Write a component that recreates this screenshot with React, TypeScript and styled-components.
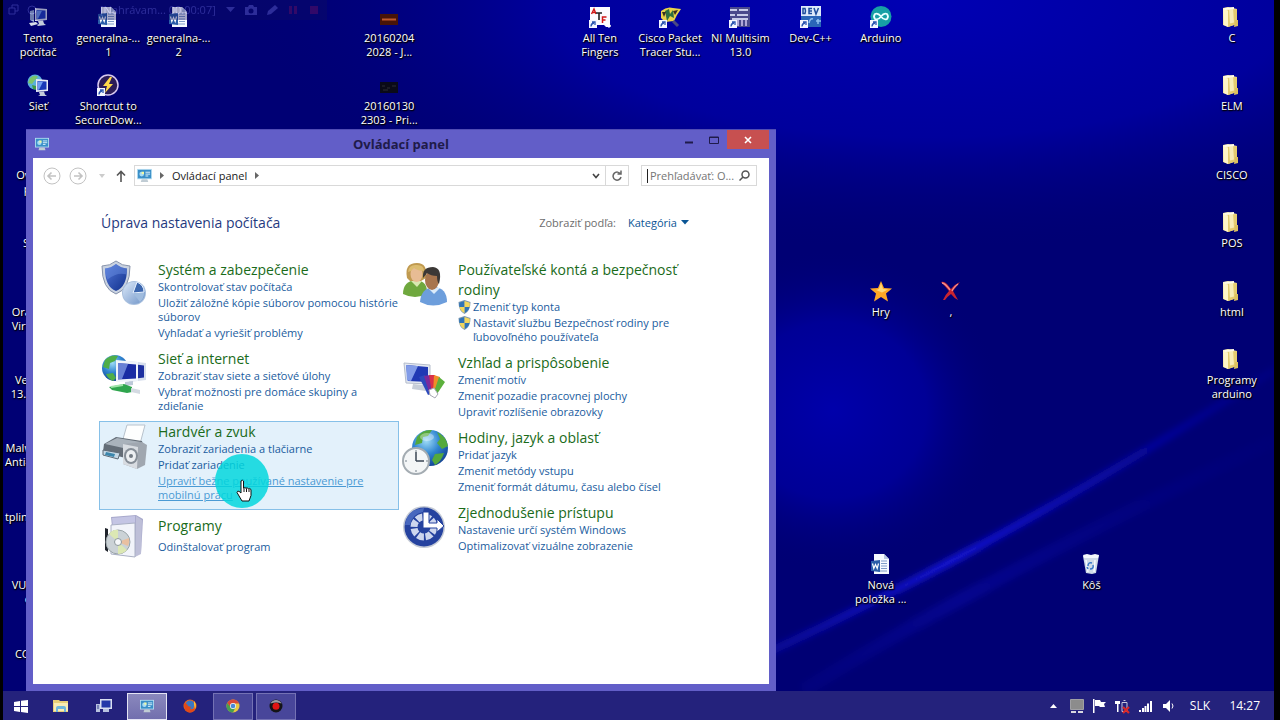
import React from "react";
import styled, { createGlobalStyle, css } from "styled-components";

const GlobalStyle = createGlobalStyle`
  * { box-sizing: border-box; }
  body { margin: 0; background: #000; font-family: "Open Sans", "Noto Sans", sans-serif; font-size: 11px; line-height: 14px; }
  button, input, select { font: inherit; color: inherit; margin: 0; padding: 0; border: 0; background: none; }
  ul { list-style: none; margin: 0; padding: 0; }
  svg { display: block; flex: none; }
`;

/* ---------- desktop ---------- */

const Screen = styled.div`
  display: flex;
  flex-direction: column;
  height: 100vh;
  padding: 0 6px 0 3px;
  background: #000;
`;

const Desktop = styled.main`
  position: relative;
  flex: 1;
  min-height: 0;
  overflow: hidden;
  background: #000078;
`;

const Wallpaper = styled.svg`
  position: absolute;
  inset: 0;
  width: 100%;
  height: 100%;
`;

const IconGrid = styled.div`
  position: relative;
  height: 100%;
  display: grid;
  grid-template-columns: repeat(18, minmax(0, 1fr));
  grid-template-rows: repeat(10, minmax(0, 1fr));
  padding: 0 7px 7px 0;
`;

const Shortcut = styled.button<{ $col: number; $row: number }>`
  grid-column: ${(p) => p.$col};
  grid-row: ${(p) => p.$row};
  display: flex;
  flex-direction: column;
  align-items: center;
  justify-content: flex-start;
  gap: 3px;
  padding-top: 6px;
  color: #fff;
  white-space: pre;
  text-shadow: 0 1px 2px #000, 1px 1px 1px #000;
`;

const RecorderBar = styled.div`
  position: absolute;
  top: 0;
  left: 0;
  display: flex;
  align-items: center;
  gap: 10px;
  height: 20px;
  width: 324px;
  padding-left: 5px;
  color: #8080e0;
  background: #101060;
  opacity: 0.35;
`;

const RecorderTitle = styled.span`
  padding-left: 50px;
`;

/* ---------- window ---------- */

const Window = styled.section`
  position: absolute;
  top: 129px;
  bottom: 0;
  left: 23px;
  width: 59%;
  display: flex;
  flex-direction: column;
  padding: 0 7px 7px;
  background: #625ec8;
  border-top: 1px solid #504cb4;
`;

const TitleBar = styled.header`
  display: grid;
  grid-template-columns: 95px 1fr 95px;
  align-items: center;
  height: 28px;
`;

const TitleIcon = styled.span`
  padding-left: 2px;
`;

const Title = styled.h1`
  margin: 0;
  font-size: 13px;
  line-height: 20px;
  text-align: center;
  color: #1f1b4a;
`;

const WindowButtons = styled.div`
  display: flex;
  align-self: start;
  justify-content: flex-end;
`;

const WindowButton = styled.button<{ $danger?: boolean }>`
  display: grid;
  place-items: center;
  width: ${(p) => (p.$danger ? 42 : 25)}px;
  height: 19px;
  background: ${(p) => (p.$danger ? "#c75050" : "transparent")};
`;

const Client = styled.div`
  flex: 1;
  min-height: 0;
  background: #fff;
  color: #222;
`;

const NavBar = styled.nav`
  display: flex;
  align-items: center;
  padding: 7px 12px 0 9px;
`;

const NavButton = styled.button<{ $width: number }>`
  display: grid;
  place-items: center;
  width: ${(p) => p.$width}px;
  height: 20px;
`;

const AddressBar = styled.div`
  display: flex;
  align-items: center;
  flex: 1;
  height: 21px;
  margin-right: 12px;
  border: 1px solid #d9d9d9;
`;

const CrumbIcon = styled.span`
  padding: 0 8px 0 2px;
`;

const Crumb = styled.button`
  padding: 0 8px;
  color: #1a1a1a;
`;

const AddressEnd = styled.div`
  display: flex;
  align-self: stretch;
  margin-left: auto;
`;

const AddressButton = styled.button<{ $divided?: boolean }>`
  display: grid;
  place-items: center;
  width: ${(p) => (p.$divided ? 23 : 17)}px;
  ${(p) => p.$divided && css`border-left: 1px solid #d9d9d9;`}
`;

const SearchBox = styled.label`
  display: flex;
  align-items: center;
  width: 116px;
  height: 21px;
  padding: 0 6px 0 5px;
  border: 1px solid #d9d9d9;
`;

const Caret = styled.span`
  width: 1px;
  height: 14px;
  background: #222;
`;

const SearchInput = styled.input`
  flex: 1;
  min-width: 0;
  padding-left: 2px;
  outline: 0;
  &::placeholder { color: #757575; opacity: 1; }
`;

const Heading = styled.div`
  display: flex;
  align-items: center;
  justify-content: space-between;
  max-width: 656px;
  height: 73px;
  padding-left: 68px;
`;

const HeadingText = styled.h2`
  margin: 0;
  font-size: 14px;
  line-height: 20px;
  font-weight: 400;
  color: #1f3a80;
`;

const ViewBy = styled.label`
  display: flex;
  align-items: center;
  color: #6d6d6d;
`;

const ViewSelect = styled.select`
  appearance: none;
  margin: 0 4px 0 12px;
  color: #0a5595;
`;

const Categories = styled.div`
  display: grid;
  grid-template-columns: repeat(2, minmax(0, 300px));
  align-items: start;
  padding-left: 66px;
`;

const Category = styled.article<{ $active?: boolean }>`
  display: flex;
  gap: 9px;
  padding: 1px 2px 8px;
  ${(p) => p.$active && css`
    background: #e3f1fb;
    box-shadow: inset 0 0 0 1px #86c0e8;
  `}
`;

const CategoryBody = styled.div`
  display: flex;
  flex-direction: column;
  justify-content: space-evenly;
  min-height: 46px;
  white-space: pre;
`;

const CategoryTitle = styled.a`
  font-size: 14px;
  line-height: 20px;
  color: #1a6b1a;
  text-decoration: none;
`;

const Tasks = styled.ul`
  display: grid;
  gap: 2px;
`;

const Task = styled.li`
  display: flex;
  gap: 2px;
`;

const TaskLink = styled.a<{ $hover?: boolean }>`
  color: ${(p) => (p.$hover ? "#4a9ad4" : "#1a5c9e")};
  text-decoration: ${(p) => (p.$hover ? "underline" : "none")};
`;

const ClickHalo = styled.div`
  position: absolute;
  top: 454px;
  left: 212px;
  width: 54px;
  height: 54px;
  border-radius: 50%;
  background: rgba(0, 214, 220, 0.84);
`;

const Pointer = styled.svg`
  position: absolute;
  top: 479px;
  left: 233px;
`;

/* ---------- taskbar ---------- */

const Taskbar = styled.footer`
  display: flex;
  align-items: center;
  gap: 3px;
  height: 29px;
  padding: 1px 0 0;
  background: #24227c;
  color: #fff;
`;

const TaskButton = styled.button<{ $state?: "active" | "open"; $narrow?: boolean }>`
  display: grid;
  place-items: center;
  width: ${(p) => (p.$narrow ? 35 : 40)}px;
  height: 27px;
  ${(p) => p.$state === "active" && css`
    background: linear-gradient(#8a88bd, #726fae);
    border: 1px solid #e4e4f4;
  `}
  ${(p) => p.$state === "open" && css`
    background: #48469a;
    border: 1px solid #7472b4;
  `}
`;

const Tray = styled.div`
  display: flex;
  align-items: center;
  margin-left: auto;
  padding-right: 14px;
`;

const TrayButton = styled.button`
  display: grid;
  place-items: center;
  width: 23px;
  height: 27px;
`;

const TrayText = styled.span<{ $width: number }>`
  width: ${(p) => p.$width}px;
  text-align: right;
  font-size: 12px;
`;

/* ---------- drawings ---------- */

const Badge = () => (
  <g>
    <rect x="0" y="14" width="8" height="8" fill="#f4f6ff" />
    <path d="M2 20.500q0-3 3-3.500M3 16h3v3" fill="none" stroke="#2a55b0" strokeWidth="1.300" />
  </g>
);

const MonitorDrawing = () => (
  <g>
    <path d="M8 2l12 1v11l-12 1z" fill="#e6ebf5" />
    <path d="M9.500 4l9 .5v8l-9 .7z" fill="#1838b8" />
    <path d="M10 4.500l5 .2-4 8-1 .1z" fill="#6f9cf0" />
    <path d="M11 15l5-.5 1 3 2 1.500-8 1-1-1 2-1z" fill="#c3cbdc" />
  </g>
);

const FolderDrawing = () => (
  <g>
    <path d="M2 2l5-1 9 2v15l-9 3-5-2z" fill="#f3e3a0" />
    <path d="M7 4l9-1v15l-9 3z" fill="#e5cc70" />
    <path d="M2 2l5 3v16l-4-2z" fill="#fff5c8" />
    <path d="M8 2l4-.5 1 15-4 1z" fill="#f8ecb8" />
    <path d="M14 14h3v6l-4 1z" fill="#dcc060" />
    <path d="M3 2l10-1v2l-9 1z" fill="#fffbe8" />
  </g>
);

const WordDrawing = () => (
  <g>
    <path d="M4 1h10l5 5v15H4z" fill="#f6f9ff" />
    <path d="M14 1l5 5h-5z" fill="#b8c6e0" />
    <path d="M11 8h6M11 10.500h6M11 13h6M11 15.500h6M8 18h9" stroke="#7f9cc8" />
    <path d="M1 8l9-1v12l-9-1z" fill="#2a5ca8" />
    <path d="M2.500 10.500l1.300 5 1.700-4 1.700 4 1.300-5" fill="none" stroke="#fff" strokeWidth="1.200" />
  </g>
);

const drawings: Record<string, React.ReactNode> = {
  computer: (
    <g>
      <MonitorDrawing />
      <path d="M3 5l4-1v12l-4-2z" fill="#9fb4d8" />
      <path d="M2 17l7-1 2 2-7 2z" fill="#d8deea" />
    </g>
  ),
  network: (
    <g>
      <circle cx="8" cy="8" r="7.500" fill="#5ab0dc" />
      <path d="M3 4q5-4 8-1l-3 3-3 4-4-1z" fill="#7cc46a" />
      <path d="M5 11l4 1 1 4-4-1z" fill="#3f9a48" />
      <g transform="translate(1 3)"><MonitorDrawing /></g>
    </g>
  ),
  word: <WordDrawing />,
  secure: (
    <g>
      <circle cx="11" cy="11" r="10" fill="#2c1c58" stroke="#d8c8f0" strokeWidth="1.500" />
      <path d="M13 3l-7 9h4l-2 7 8-9h-4l3-7z" fill="#ffd94a" />
      <Badge />
    </g>
  ),
  videoRed: (
    <g>
      <rect x="2" y="8" width="18" height="11" fill="#481408" />
      <path d="M4 13.500h14" stroke="#c0582c" strokeWidth="2" />
    </g>
  ),
  videoDark: (
    <g>
      <rect x="2" y="8" width="18" height="11" fill="#0a0a18" />
      <path d="M4 12h3M9 14h3M14 12h4M5 16h5" stroke="#2c2c34" />
    </g>
  ),
  atf: (
    <g>
      <path d="M1 1h20v20h-4l-2-2H1z" fill="#fbfbff" />
      <path d="M15 14l6 7" stroke="#fff" strokeWidth="3" />
      <path d="M2.500 8l2.500-5 2 5M3.500 6.500h3" stroke="#d01818" strokeWidth="1.400" fill="none" />
      <path d="M7 7h6M10 7v7" stroke="#222" strokeWidth="1.600" fill="none" />
      <path d="M13.500 17v-6h4M13.500 14h3" stroke="#d01818" strokeWidth="1.500" fill="none" />
      <Badge />
    </g>
  ),
  packet: (
    <g>
      <path d="M2 5q6-5 12-3l8 1-4 6-3 6-9 1-4-4z" fill="#e8d24a" />
      <path d="M6 5l4-2 1 5 3-4 1 8-4-2-3 5z" fill="#2e7040" />
      <path d="M3 6l4 0-2 5zM14 5l5-1-3 5z" fill="#383020" />
      <path d="M14 15l5 5" stroke="#4a4a80" strokeWidth="3" />
      <Badge />
    </g>
  ),
  multisim: (
    <g>
      <rect x="1" y="1" width="20" height="20" fill="#4a4a8c" />
      <path d="M1 4h7M10 4h9M1 9h5M8 9h11M3 13h16" stroke="#c8cce8" strokeWidth="2" />
      <path d="M9 14v6M13 14v6M17 14v6" stroke="#b0a8d8" strokeWidth="2" />
      <Badge />
    </g>
  ),
  dev: (
    <g>
      <rect x="1" y="0" width="20" height="21" fill="#2a66b8" />
      <rect x="1" y="0" width="20" height="10" fill="#dce9fa" />
      <path d="M3 2.500v5h2q1-2.500 0-5zM12 2.500H9v5h3M9 5h3M14 2l2 6 2.500-6" fill="none" stroke="#1c4c9c" strokeWidth="1.500" />
      <path d="M9 17q1-5 4-4M16 15h5M18 13v5" stroke="#8fc0f0" fill="none" strokeWidth="1.500" />
      <Badge />
    </g>
  ),
  arduino: (
    <g>
      <circle cx="11" cy="10.500" r="10.500" fill="#17a0a5" />
      <path d="M11 10.500q-3-4-6-2.500-2 2.500 0 5 3 1.500 6-2.500 3-4 6-2.500 2 2.500 0 5-3 1.500-6-2.500z" fill="none" stroke="#e8ffff" strokeWidth="1.800" />
      <Badge />
    </g>
  ),
  folder: <FolderDrawing />,
  star: (
    <g>
      <path d="M11 1l3 7 8 .5-6 5 2 8-7-4.500-7 4.500 2-8-6-5 8-.5z" fill="#ffa726" />
      <path d="M11 3l2 6 5 .5-6 3-6-2.500 3-1z" fill="#ffd878" />
    </g>
  ),
  cross: (
    <g>
      <path d="M1 2q3-1 6 2l4 5q4-5 9-7-4 5-7 9l5 9q-4-2-7-6-3 2-6 6l-2 0q2-5 6-9-4-5-8-9z" fill="#c82430" />
      <path d="M2 3q3 0 8 7M18 4q-5 4-6 7" stroke="#f09090" strokeWidth="1.300" fill="none" />
    </g>
  ),
  bin: (
    <g>
      <path d="M3 3l16-1-3 18-4 1-6-1z" fill="#cfdbe8" />
      <path d="M3 2l4-1 4 1 4-1 4 1-1 3H4z" fill="#f4f8fc" />
      <path d="M6 7l2 12M15 7l-1 12" stroke="#f6faff" strokeWidth="1.500" />
      <path d="M8 13q0-4 4-3M13 12q1 4-3 4M8 16l-1-2" stroke="#3878c8" strokeWidth="1.500" fill="none" />
    </g>
  ),
};

const PanelIcon = ({ size }: { size: number }) => (
  <svg width={size} height={size} viewBox="0 0 16 16" aria-hidden="true">
    <path d="M0 1h16v11H0z" fill="#b4dcf0" />
    <path d="M1 2h14v9H1z" fill="#3a8fc8" />
    <circle cx="5" cy="6.500" r="2.500" fill="#a8dcf4" />
    <path d="M5 6.500V4h2.500v2.500z" fill="#f4f8a0" />
    <path d="M9 4.500h5M9 6.500h5M9 8.500h3" stroke="#e4f6ff" />
    <path d="M5 12h6l1 3H4z" fill="#c0ccd4" />
  </svg>
);

const UacShield = () => (
  <svg width="13" height="14" viewBox="0 0 13 14" aria-hidden="true">
    <path d="M6.500 0l6 2q0 9-6 12-6-3-6-12z" fill="#7c98b0" />
    <path d="M6.500 1v6H1.500Q1 5 1.300 2.700zM6.500 7h5q-1 4-5 6z" fill="#2f74b8" />
    <path d="M6.500 1v6h5q.5-2 .2-4.300zM6.500 7h-5q1 4 5 6z" fill="#f2d75c" />
  </svg>
);

const categoryArt: Record<string, React.ReactNode> = {
  security: (
    <g>
      <path d="M15 1q6 5 14 5 0 23-14 28Q1 29 1 6q8 0 14-5z" fill="#c9d2e0" stroke="#8793ab" />
      <path d="M15 4q5 4 11 4.500Q26 27 15 31 4 27 4 8.500 10 8 15 4z" fill="url(#shieldFill)" />
      <path d="M15 4q5 4 11 4.500 0 3-.5 6-9-3-19 5Q4 14 4 8.500 10 8 15 4z" fill="#6d92e4" opacity=".45" />
      <circle cx="33" cy="33" r="12" fill="#a9c0de" />
      <circle cx="33" cy="33" r="11" fill="url(#discFill)" />
      <path d="M32 33l4-11q7 3 7 10z" fill="#3c66ae" stroke="#e8f2ff" />
      <path d="M32 33h11q0 5-4 9z" fill="#a0bcde" />
    </g>
  ),
  internet: (
    <g>
      <circle cx="14" cy="19" r="13" fill="url(#globeFill)" />
      <path d="M4 11q6-6 13-4l-3 5-5 2-1 6-6-2zM5 25l7-1 3 5-3 3q-5-2-7-7z" fill="#4fae48" />
      <path d="M28 12l17 2v17l-17 2z" fill="#d6deec" />
      <path d="M31 15l12 1.500v12L31 30z" fill="#1e30a0" />
      <path d="M15 11l22 2v19l-22 1z" fill="#f0f4fa" />
      <path d="M17 14l18 1.500v14L17 30.500z" fill="#1a2ca4" />
      <path d="M17 14l10 1-6 15-4 .4z" fill="#8aa4ea" opacity=".7" />
      <path d="M24 33l8-1v4l-8 1z" fill="#bcc8d8" />
      <path d="M8 38l15-3 8 3v5l-5 1-15-3z" fill="#2fa54e" />
      <path d="M30 39l9 2v4l-9-2z" fill="#d4dae2" />
      <path d="M10 38l12-2" stroke="#9fe4a8" strokeWidth="2" />
    </g>
  ),
  hardware: (
    <g>
      <path d="M22 17l4-14 18 0-5 19z" fill="#fdfefe" stroke="#b8c2cc" />
      <path d="M3 22l12-7 26 4 2 8-15 10-26-7z" fill="#646d77" />
      <path d="M4 22l12-6 24 4-13 7z" fill="#a9b2bb" />
      <path d="M2 28l17 3-2 6-15-4z" fill="#c4d8e6" stroke="#5e6a76" />
      <path d="M5 30l9 2-1 3-9-2z" fill="#3b86ac" />
      <path d="M22 22l19-2 5 3-2 20-8 4-14-5z" fill="#a0a7b0" />
      <path d="M22 22l15 3-1 22-14-5z" fill="#d8dce1" />
      <ellipse cx="30" cy="34" rx="7" ry="8" fill="#858d96" />
      <ellipse cx="30" cy="34" rx="5" ry="6" fill="#eceff2" />
      <circle cx="30" cy="34" r="2" fill="#737b84" />
    </g>
  ),
  programs: (
    <g>
      <path d="M10 6l25-2 7 4-2 34-26 2z" fill="#a8a9cc" />
      <path d="M11 7l23-2v10l-22 1z" fill="#c4c5e4" />
      <path d="M35 5l6 4-1 34-6 3z" fill="#bebfd8" />
      <path d="M10 14l24-2v34l-24-3z" fill="#f2f4fa" stroke="#aab0c4" />
      <path d="M4 17l3 1v23l-3-2z" fill="#20242c" />
      <circle cx="17" cy="31" r="12" fill="#cbd2d6" stroke="#9aa4a8" />
      <path d="M17 31l-9-8q4-5 9-4zM17 31l9 8q-4 4-9 4z" fill="#dce8b4" />
      <path d="M17 31l11-4q1 4-1 8z" fill="#e9c0a0" />
      <circle cx="17" cy="31" r="3.500" fill="#f6f8fa" stroke="#8e989c" />
    </g>
  ),
  users: (
    <g>
      <path d="M2 34q0-13 13-14 12 1 11 14-12 6-24 0z" fill="#6fa83e" />
      <path d="M10 21l6 6 5-6z" fill="#d8e8b0" />
      <path d="M6 18Q3 3 16 3q11 0 9 15l-5 3H9z" fill="#c09a50" />
      <ellipse cx="15.500" cy="14" rx="6" ry="8" fill="#e8bc94" />
      <path d="M7 12q1-8 9-7 7 0 7 6-6 0-10-3-2 3-6 4z" fill="#dcbc70" />
      <path d="M19 42q1-14 14-15 13 1 13 15-14 7-27 0z" fill="#6d9edc" />
      <path d="M27 28l6 6 6-6z" fill="#dcebfa" />
      <ellipse cx="31" cy="20" rx="7" ry="10" fill="#a8754e" />
      <path d="M22 18q-1-11 10-11 10 1 6 17-2-2-2-8-6 0-10-3-1 2-4 5z" fill="#3c3836" />
    </g>
  ),
  appearance: (
    <g>
      <path d="M3 10l26 2v19L5 30z" fill="#e4e9f1" stroke="#b5bdcc" />
      <path d="M5 12l22 2v15L7 28z" fill="#2039b4" />
      <path d="M5 12l12 1-7 15-4-.5z" fill="#829ce8" />
      <path d="M12 31l10 1 3 6-14-2z" fill="#c7ced9" />
      <path d="M18 24l6-2 8 18-5 2z" fill="#2c4abc" />
      <path d="M23 23l6-1 5 17-5 3z" fill="#7a2a9c" />
      <path d="M28 22l6 0 2 16-5 3z" fill="#d8304a" />
      <path d="M33 22l6 2-3 15-4 1z" fill="#f08c28" />
      <path d="M38 24l6 5-8 12-3-2z" fill="#5cb03c" />
      <path d="M28 37l5-2 4 6-3 4-5-3z" fill="#fff" stroke="#a8a8b4" />
    </g>
  ),
  clock: (
    <g>
      <circle cx="29" cy="20" r="18" fill="url(#globeFill)" />
      <path d="M16 9q6-8 15-7l-4 6-5 1-1 6-7 2zM36 4q9 4 11 14l-6 3-5-6 3-4zM34 26l9-1q-3 9-9 12l-3-5z" fill="#54a93c" />
      <ellipse cx="26" cy="9" rx="7" ry="4" fill="#fff" opacity=".35" />
      <circle cx="15" cy="33" r="13" fill="#f4f6f7" stroke="#a4acb2" strokeWidth="2" />
      <path d="M15 33V24M15 33h8" stroke="#3a4654" strokeWidth="1.500" />
      <path d="M15 22v2M15 42v2M4 33h2M25 33h2" stroke="#77828c" />
    </g>
  ),
  ease: (
    <g>
      <circle cx="23" cy="24" r="21" fill="#c4cad6" />
      <circle cx="23" cy="24" r="19.500" fill="#25429f" />
      <circle cx="23" cy="24" r="10" fill="none" stroke="#cdd6ee" strokeWidth="7" strokeDasharray="6.200 1.650" />
      <path d="M4 22Q6 6 23 5l-1 4q-11 2-13 13z" fill="#5f80d4" opacity=".6" />
      <path d="M22 9h6v11h8v-4l7 7-7 6v-4H22z" fill="#fff" stroke="#25429f" />
    </g>
  ),
};

/* ---------- data ---------- */

const shortcuts: [number, number, string, string?][] = [
  [1, 1, "Tento\npočítač", "computer"],
  [1, 2, "Sieť", "network"],
  [1, 3, "Ovládací\npanel"],
  [1, 4, "Skype"],
  [1, 5, "Oracle VM\nVirtualBox"],
  [1, 6, "Verzia - k\n13.0 - prog"],
  [1, 7, "Malwareby...\nAnti-Malwa..."],
  [1, 8, "tplink - utility"],
  [1, 9, "VUB klient\ncesta"],
  [1, 10, "CCleaner"],
  [2, 1, "generalna-...\n1", "word"],
  [2, 2, "Shortcut to\nSecureDow...", "secure"],
  [3, 1, "generalna-...\n2", "word"],
  [6, 1, "20160204\n2028 - J...", "videoRed"],
  [6, 2, "20160130\n2303 - Pri...", "videoDark"],
  [9, 1, "All Ten\nFingers", "atf"],
  [10, 1, "Cisco Packet\nTracer Stu...", "packet"],
  [11, 1, "NI Multisim\n13.0", "multisim"],
  [12, 1, "Dev-C++", "dev"],
  [13, 1, "Arduino", "arduino"],
  [13, 5, "Hry", "star"],
  [14, 5, ",", "cross"],
  [13, 9, "Nová\npoložka ...", "word"],
  [16, 9, "Kôš", "bin"],
  [18, 1, "C", "folder"],
  [18, 2, "ELM", "folder"],
  [18, 3, "CISCO", "folder"],
  [18, 4, "POS", "folder"],
  [18, 5, "html", "folder"],
  [18, 6, "Programy\narduino", "folder"],
];

type CategoryData = { art: string; title: string; tasks: string[]; shield?: boolean; hovered?: number };

const leftColumn: CategoryData[] = [
  { art: "security", title: "Systém a zabezpečenie", tasks: ["Skontrolovať stav počítača", "Uložiť záložné kópie súborov pomocou histórie\nsúborov", "Vyhľadať a vyriešiť problémy"] },
  { art: "internet", title: "Sieť a internet", tasks: ["Zobraziť stav siete a sieťové úlohy", "Vybrať možnosti pre domáce skupiny a\nzdieľanie"] },
  { art: "hardware", title: "Hardvér a zvuk", hovered: 2, tasks: ["Zobraziť zariadenia a tlačiarne", "Pridať zariadenie", "Upraviť bežne používané nastavenie pre\nmobilnú prácu"] },
  { art: "programs", title: "Programy", tasks: ["Odinštalovať program"] },
];

const rightColumn: CategoryData[] = [
  { art: "users", title: "Používateľské kontá a bezpečnosť\nrodiny", shield: true, tasks: ["Zmeniť typ konta", "Nastaviť službu Bezpečnosť rodiny pre\nľubovoľného používateľa"] },
  { art: "appearance", title: "Vzhľad a prispôsobenie", tasks: ["Zmeniť motív", "Zmeniť pozadie pracovnej plochy", "Upraviť rozlíšenie obrazovky"] },
  { art: "clock", title: "Hodiny, jazyk a oblasť", tasks: ["Pridať jazyk", "Zmeniť metódy vstupu", "Zmeniť formát dátumu, času alebo čísel"] },
  { art: "ease", title: "Zjednodušenie prístupu", tasks: ["Nastavenie určí systém Windows", "Optimalizovať vizuálne zobrazenie"] },
];

const CategoryList = ({ items }: { items: CategoryData[] }) => (
  <div>
    {items.map((c) => (
      <Category key={c.art} $active={c.hovered !== undefined}>
        <svg width="48" height="48" viewBox="0 0 48 48" aria-hidden="true">{categoryArt[c.art]}</svg>
        <CategoryBody>
          <CategoryTitle href="#">{c.title}</CategoryTitle>
          <Tasks>
            {c.tasks.map((t, i) => (
              <Task key={t}>
                {c.shield && <UacShield />}
                <TaskLink href="#" $hover={c.hovered === i}>{t}</TaskLink>
              </Task>
            ))}
          </Tasks>
        </CategoryBody>
      </Category>
    ))}
  </div>
);

const CrumbArrow = () => (
  <svg width="4" height="7" viewBox="0 0 4 7" aria-hidden="true"><path d="M0 0l4 3.500L0 7z" fill="#666" /></svg>
);

export default function App() {
  return (
    <Screen>
      <GlobalStyle />
      <Desktop>
        <Wallpaper viewBox="0 0 1271 691" preserveAspectRatio="none" aria-hidden="true">
          <defs>
            <linearGradient id="shieldFill" x1="0" y1="0" x2="1" y2="1"><stop offset="0" stopColor="#5478d8" /><stop offset="1" stopColor="#10308c" /></linearGradient>
            <linearGradient id="discFill" x1="0" y1="0" x2="1" y2="1"><stop offset="0" stopColor="#dbe8f8" /><stop offset="1" stopColor="#6f94c8" /></linearGradient>
            <radialGradient id="globeFill" cx=".4" cy=".3" r=".75"><stop offset="0" stopColor="#9fdcf6" /><stop offset=".5" stopColor="#2f84d0" /><stop offset="1" stopColor="#123f90" /></radialGradient>
            <radialGradient id="topGlow" cx=".5" cy=".5" r=".5"><stop offset="0" stopColor="#0000b4" /><stop offset=".55" stopColor="#0000aa" stopOpacity=".75" /><stop offset="1" stopColor="#000078" stopOpacity="0" /></radialGradient>
            <linearGradient id="streak" x1="0" y1="1" x2="1" y2="0"><stop offset="0" stopColor="#1414c8" stopOpacity="0.4" /><stop offset=".35" stopColor="#1414dc" /><stop offset="1" stopColor="#0808b0" stopOpacity=".2" /></linearGradient>
            <filter id="soft" x="-20%" y="-20%" width="140%" height="140%"><feGaussianBlur stdDeviation="3" /></filter>
          </defs>
          <rect width="1271" height="691" fill="#000074" />
          <ellipse cx="920" cy="0" rx="680" ry="250" fill="url(#topGlow)" />
          <ellipse cx="830" cy="410" rx="170" ry="160" fill="url(#topGlow)" opacity=".85" />
          <path d="M757 656Q1000 545 1271 370" fill="none" stroke="url(#streak)" strokeWidth="8" filter="url(#soft)" />
          <path d="M800 691Q960 590 1271 440" fill="none" stroke="url(#streak)" strokeWidth="14" opacity=".25" filter="url(#soft)" />
        </Wallpaper>

        <IconGrid>
          {shortcuts.map(([col, row, label, art]) => (
            <Shortcut key={`${col}-${row}`} $col={col} $row={row}>
              <svg width="22" height="22" viewBox="0 0 22 22" aria-hidden="true">{art && drawings[art]}</svg>
              {label}
            </Shortcut>
          ))}
        </IconGrid>

        <RecorderBar>
          <svg width="32" height="12" viewBox="0 0 32 12" fill="none" stroke="currentColor" aria-hidden="true">
            <path d="M1 4h6v6H1zM4 4V1h6v6H7" /><circle cx="24" cy="6" r="4" />
          </svg>
          <RecorderTitle>[Nahrávam... 00:00:07]</RecorderTitle>
          <svg width="96" height="12" viewBox="0 0 96 12" fill="currentColor" aria-hidden="true">
            <path d="M0 3h9L4.500 8zM19 3h3l1-2h4l1 2h3v8H19z" /><circle cx="25" cy="7" r="2.500" fill="#101060" />
            <path d="M41 11l1-4 7-6 3 3-7 6z" />
            <path d="M63 2h3v8h-3zM68 2h3v8h-3zM84 2h8v8h-8z" fill="#901c50" />
          </svg>
        </RecorderBar>

        <Window aria-label="Ovládací panel">
          <TitleBar>
            <TitleIcon><PanelIcon size={14} /></TitleIcon>
            <Title>Ovládací panel</Title>
            <WindowButtons>
              <WindowButton aria-label="Minimalizovať"><svg width="8" height="8"><path d="M0 6.500h8" stroke="#1f1b4a" strokeWidth="2" /></svg></WindowButton>
              <WindowButton aria-label="Maximalizovať"><svg width="10" height="8"><path d="M.5 1h9v6.500h-9zM0 1.500h10" fill="none" stroke="#1f1b4a" /></svg></WindowButton>
              <WindowButton $danger aria-label="Zavrieť"><svg width="8" height="8"><path d="M1 1l6 6M7 1L1 7" stroke="#fff" strokeWidth="1.600" /></svg></WindowButton>
            </WindowButtons>
          </TitleBar>

          <Client>
            <NavBar>
              <NavButton $width={19} aria-label="Späť">
                <svg width="18" height="18" viewBox="0 0 18 18" fill="none" stroke="#c2c2c2"><circle cx="9" cy="9" r="8" /><path d="M13 9H5M8.500 5.500L5 9l3.500 3.500" strokeWidth="1.600" /></svg>
              </NavButton>
              <NavButton $width={34} aria-label="Dopredu">
                <svg width="18" height="18" viewBox="0 0 18 18" fill="none" stroke="#c2c2c2"><circle cx="9" cy="9" r="8" /><path d="M5 9h8M9.500 5.500L13 9l-3.500 3.500" strokeWidth="1.600" /></svg>
              </NavButton>
              <NavButton $width={13} aria-label="Posledné umiestnenia">
                <svg width="6" height="4"><path d="M0 0h6L3 4z" fill="#ccc" /></svg>
              </NavButton>
              <NavButton $width={26} aria-label="Nahor">
                <svg width="10" height="12" fill="none" stroke="#555" strokeWidth="1.600"><path d="M5 12V1.500M1 5.500l4-4 4 4" /></svg>
              </NavButton>
              <AddressBar>
                <CrumbIcon><PanelIcon size={15} /></CrumbIcon>
                <CrumbArrow />
                <Crumb>Ovládací panel</Crumb>
                <CrumbArrow />
                <AddressEnd>
                  <AddressButton aria-label="Predchádzajúce umiestnenia"><svg width="8" height="6" fill="none" stroke="#444" strokeWidth="1.600"><path d="M1 1l3 3.500L7 1" /></svg></AddressButton>
                  <AddressButton $divided aria-label="Obnoviť"><svg width="10" height="11" viewBox="0 0 10 11" fill="none" stroke="#666" strokeWidth="1.500"><path d="M8.500 4A4 4 0 1 0 9 7M9 .5V4H5.500" /></svg></AddressButton>
                </AddressEnd>
              </AddressBar>
              <SearchBox>
                <Caret />
                <SearchInput type="text" placeholder="Prehľadávať: O..." aria-label="Prehľadávať" />
                <svg width="11" height="11" viewBox="0 0 11 11" fill="none" stroke="#555" strokeWidth="1.500"><circle cx="6.500" cy="4.500" r="3.500" /><path d="M4 7l-3.500 3.500" /></svg>
              </SearchBox>
            </NavBar>

            <Heading>
              <HeadingText>Úprava nastavenia počítača</HeadingText>
              <ViewBy>
                Zobraziť podľa:
                <ViewSelect><option>Kategória</option></ViewSelect>
                <svg width="8" height="5"><path d="M0 0h8L4 4.500z" fill="#0a5595" /></svg>
              </ViewBy>
            </Heading>

            <Categories>
              <CategoryList items={leftColumn} />
              <CategoryList items={rightColumn} />
            </Categories>
          </Client>
        </Window>

        <ClickHalo />
        <Pointer width="18" height="24" viewBox="0 0 18 24" aria-hidden="true">
          <path d="M5 2q1.500-1.500 2.500 0v7l1-.5 1.500.7 1-.4 1.500.8 1-.2 1.500 1.100v6l-2 5.500H6L1 13.500q.5-2 2-1.200L5 14z" fill="#fff" stroke="#111" />
          <path d="M8 9v4M10.500 9.500V13M13 10v3" stroke="#111" />
        </Pointer>
      </Desktop>

      <Taskbar>
        <TaskButton $narrow aria-label="Štart">
          <svg width="14" height="13" viewBox="0 0 14 13" fill="#fff"><path d="M0 2l6-1v5H0zM7 .8L14 0v6H7zM0 7h6v5l-6-1zM7 7h7v6l-7-.9z" /></svg>
        </TaskButton>
        <TaskButton aria-label="Prieskumník">
          <svg width="16" height="14" viewBox="0 0 16 14"><path d="M0 1h6l1 1h8v11H0z" fill="#e8cf78" /><path d="M1 4h14v8H1z" fill="#f9ecb4" /><path d="M3 13V9q0-2 2-2h6q2 0 2 2v4h-2v-3H5v3z" fill="#70b8dc" /></svg>
        </TaskButton>
        <TaskButton aria-label="Počítač">
          <svg width="16" height="14" viewBox="0 0 16 14"><path d="M4 0h12v10H4z" fill="#d8def0" /><path d="M5.500 1.500h9v7h-9z" fill="#2438a8" /><path d="M7 10h6v3H7zM0 5h4v8H0z" fill="#b8c2e0" /><path d="M1 7h2M1 9h2" stroke="#34408c" /></svg>
        </TaskButton>
        <TaskButton $state="active" aria-label="Ovládací panel"><PanelIcon size={14} /></TaskButton>
        <TaskButton aria-label="Firefox">
          <svg width="14" height="14" viewBox="0 0 14 14"><circle cx="7" cy="7" r="6.500" fill="#e8641c" /><circle cx="7" cy="6" r="4.500" fill="#3a78c4" /><path d="M1 4q3 0 4 3l3 1-1 2q3 1 5-1-1 5-6 4.500-5-1-5-9.500z" fill="#e04818" /><path d="M11 2q3 3 1 8l-1-5z" fill="#ffc438" /></svg>
        </TaskButton>
        <TaskButton $state="open" aria-label="Chrome">
          <svg width="14" height="14" viewBox="0 0 14 14"><circle cx="7" cy="7" r="6.500" fill="#e8c840" /><path d="M1.200 4A6.500 6.500 0 0 1 13 4.500H7L4 8z" fill="#d84838" /><path d="M1.200 4A6.500 6.500 0 0 0 7 13.500L9.500 8.500 4.500 8z" fill="#48a050" /><circle cx="7" cy="7" r="3" fill="#f4f8fc" /><circle cx="7" cy="7" r="2.300" fill="#4888d8" /></svg>
        </TaskButton>
        <TaskButton $state="open" aria-label="Nahrávanie">
          <svg width="14" height="14" viewBox="0 0 14 14"><circle cx="7" cy="7" r="6.500" fill="#141418" /><path d="M1.500 4.500a6 6 0 0 1 11 0q-5-2-11 0z" fill="#9a9aa4" /><circle cx="7" cy="7.300" r="3.500" fill="#e01414" /></svg>
        </TaskButton>

        <Tray>
          <TrayButton aria-label="Skryté ikony"><svg width="7" height="4"><path d="M0 4l3.500-4L7 4z" fill="#fff" /></svg></TrayButton>
          <TrayButton aria-label="Dotykový panel"><svg width="14" height="14"><path d="M.5.5h13v10H.5z" fill="#8c8c8c" stroke="#a0a0a4" /><path d="M1 13h5M8 13h5" stroke="#d8d8e0" strokeWidth="2" /></svg></TrayButton>
          <TrayButton aria-label="Centrum akcií"><svg width="13" height="14" fill="#fff"><path d="M0 0h1.500v14H0zM2 1h5l1 2h5l-2 2 1 3H7L6 7H2z" /></svg></TrayButton>
          <TrayButton aria-label="Batéria">
            <svg width="15" height="15"><path d="M0 2h5v3H0zM2 4h1.500v9H2z" fill="#fff" /><path d="M7 3.500h5v9H7zM8.500 1.500h2" fill="none" stroke="#c8c8dc" /><path d="M8 8l6 6M14 8l-6 6" stroke="#d82828" strokeWidth="2.200" /></svg>
          </TrayButton>
          <TrayButton aria-label="Sieť"><svg width="13" height="11" fill="#fff"><path d="M0 9h2v2H0zM3 7h2v4H3zM5.500 5h2v6h-2zM8 2.500h2V11H8zM11 0h2v11h-2z" /></svg></TrayButton>
          <TrayButton aria-label="Hlasitosť"><svg width="12" height="12"><path d="M0 4h3l4-4v12L3 8H0z" fill="#fff" /><path d="M9 3.500q2 2.500 0 5" fill="none" stroke="#fff" /></svg></TrayButton>
          <TrayText $width={30}>SLK</TrayText>
          <TrayText $width={50}>14:27</TrayText>
        </Tray>
      </Taskbar>
    </Screen>
  );
}
